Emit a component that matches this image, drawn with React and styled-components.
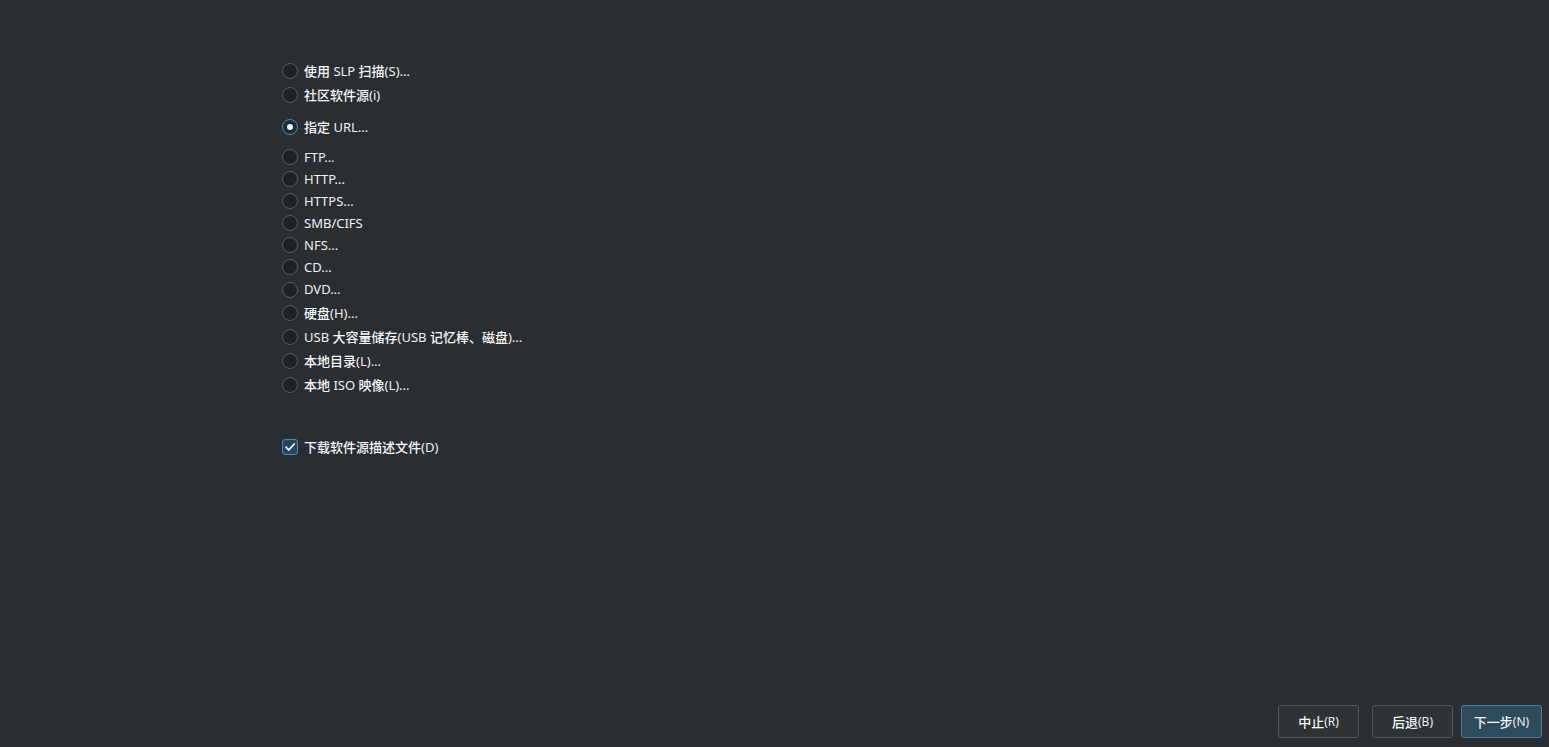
import React from "react";
import styled, { createGlobalStyle } from "styled-components";

const GlobalStyle = createGlobalStyle`
	html, body {
		margin: 0;
		padding: 0;
		background-color: #2a2e32;
	}
	body {
		font-family: "Noto Sans", "Noto Sans CJK SC", sans-serif;
		font-size: 13px;
		color: #eff0f1;
	}
`;

const Page = styled.div`
	width: 1549px;
	height: 747px;
	display: flex;
	flex-direction: column;
	background-color: #2a2e32;
	overflow: hidden;
`;

const Content = styled.div`
	flex: 1;
	display: flex;
	flex-direction: column;
	padding: 59px 0px 0px 282px;
`;

const Group = styled.div`
	display: flex;
	flex-direction: column;
	margin-top: ${(props) => props.gap || "0px"};
`;

const Row = styled.label`
	display: flex;
	flex-direction: row;
	align-items: center;
	height: ${(props) => props.h || "22px"};
	gap: 6px;
	cursor: default;
	user-select: none;
`;

const RadioCircle = styled.span`
	box-sizing: border-box;
	width: 16px;
	height: 16px;
	border-radius: 50%;
	border: 1px solid ${(props) => (props.checked ? "#3d8fc0" : "#5a5e62")};
	background-color: ${(props) => (props.checked ? "#1f2b34" : "#1f2225")};
	display: flex;
	align-items: center;
	justify-content: center;
	flex-shrink: 0;
	&::after {
		content: "";
		display: ${(props) => (props.checked ? "block" : "none")};
		width: 6px;
		height: 6px;
		border-radius: 50%;
		background-color: #f4f6f7;
	}
`;

const CheckBox = styled.span`
	box-sizing: border-box;
	width: 16px;
	height: 16px;
	border-radius: 3px;
	border: 1px solid #3d8fc0;
	background-color: #2a4557;
	display: flex;
	align-items: center;
	justify-content: center;
	flex-shrink: 0;
`;

const LabelText = styled.span`
	font-size: 13px;
	line-height: 1;
	color: #eff0f1;
	white-space: nowrap;
`;

const Han = styled.span`
	font-weight: 500;
	color: #f6f7f8;
`;

const Footer = styled.div`
	display: flex;
	flex-direction: row;
	justify-content: flex-end;
	align-items: center;
	padding: 0px 7px 9px 0px;
`;

const Button = styled.button`
	box-sizing: border-box;
	width: 81px;
	height: 33px;
	margin-left: ${(props) => props.spacing || "0px"};
	border-radius: 3px;
	border: 1px solid ${(props) => (props.primary ? "#4b7d99" : "#53585d")};
	background-color: ${(props) => (props.primary ? "#2e4a5b" : "#2f3337")};
	color: #eff0f1;
	font-family: "Noto Sans", "Noto Sans CJK SC", sans-serif;
	font-size: 13px;
	padding: 0px;
	display: flex;
	align-items: center;
	justify-content: center;
`;

const Small = styled.span`
	font-size: 12px;
`;

// wrap runs of Chinese characters so they get the heavier CJK weight
function Label({ text }) {
	const parts = text.split(/([\u3000-\u303f\u4e00-\u9fff]+)/);
	return (
		<LabelText>
			{parts.map((p, i) =>
				i % 2 === 1 ? <Han key={i}>{p}</Han> : p
			)}
		</LabelText>
	);
}

function Radio(props) {
	return (
		<Row h={props.h}>
			<RadioCircle checked={props.checked} />
			<Label text={props.text} />
		</Row>
	);
}

const sources = [
	{ text: "FTP..." },
	{ text: "HTTP..." },
	{ text: "HTTPS..." },
	{ text: "SMB/CIFS" },
	{ text: "NFS..." },
	{ text: "CD..." },
	{ text: "DVD...", h: "23px" },
	{ text: "硬盘(H)...", h: "24px" },
	{ text: "USB 大容量储存(USB 记忆棒、磁盘)...", h: "24px" },
	{ text: "本地目录(L)...", h: "24px" },
	{ text: "本地 ISO 映像(L)...", h: "24px" },
];

function App() {
	return (
		<Page>
			<GlobalStyle />
			<Content>
				<Group>
					<Radio h="24px" text="使用 SLP 扫描(S)..." />
					<Radio h="24px" text="社区软件源(i)" />
				</Group>
				<Group gap="8px">
					<Radio h="24px" checked text="指定 URL..." />
				</Group>
				<Group gap="7px">
					{sources.map((s) => (
						<Radio key={s.text} h={s.h} text={s.text} />
					))}
				</Group>
				<Group gap="38px">
					<Row h="24px">
						<CheckBox>
							<svg width="12" height="12" viewBox="0 0 12 12">
								<path
									d="M2 6.2 L4.8 9 L10.2 3"
									fill="none"
									stroke="#f4f6f7"
									strokeWidth="1.8"
									strokeLinecap="round"
									strokeLinejoin="round"
								/>
							</svg>
						</CheckBox>
						<Label text="下载软件源描述文件(D)" />
					</Row>
				</Group>
			</Content>
			<Footer>
				<Button>
					<Han>中止</Han>
					<Small>(R)</Small>
				</Button>
				<Button spacing="13px">
					<Han>后退</Han>
					<Small>(B)</Small>
				</Button>
				<Button spacing="8px" primary>
					<Han>下一步</Han>
					<Small>(N)</Small>
				</Button>
			</Footer>
		</Page>
	);
}

export default App;
